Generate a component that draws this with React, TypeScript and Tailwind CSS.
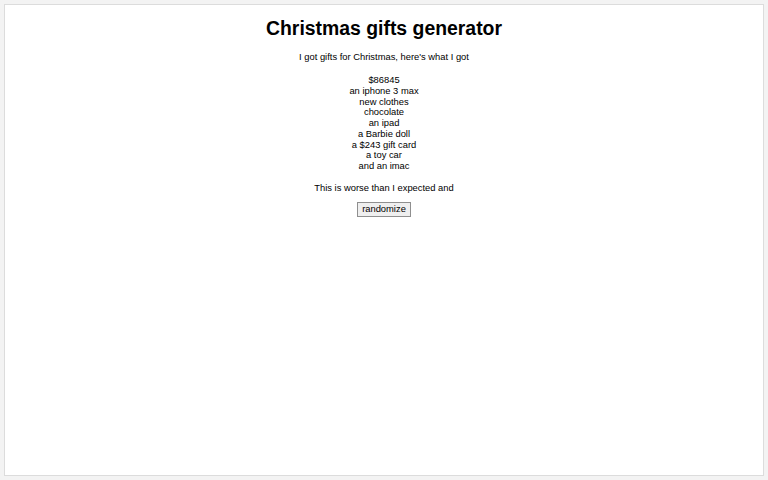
import React, { useState } from "react";

const GIFTS = [
  "$86845",
  "an iphone 3 max",
  "new clothes",
  "chocolate",
  "an ipad",
  "a Barbie doll",
  "a $243 gift card",
  "a toy car",
  "and an imac",
];

export default function App() {
  const [gifts, setGifts] = useState<string[]>(GIFTS);

  function randomize() {
    const next = [...gifts];
    next.sort(() => Math.random() - 0.5);
    setGifts(next);
  }

  return (
    <div className="h-[480px] w-[768px] bg-[#f3f3f3] p-[4px]">
      <div className="h-full w-full border border-[#dcdcdc] bg-white text-center font-['Liberation_Sans',Arial,sans-serif] text-[9.37px] leading-normal text-black">
        <h1 className="mt-[12px] text-[19.4px] font-bold leading-[22px]">Christmas gifts generator</h1>
        <p className="mt-[11px]">I got gifts for Christmas, here's what I got</p>
        <div className="mt-[11px] leading-[10.75px]">
          {gifts.map((gift) => (
            <div key={gift}>{gift}</div>
          ))}
        </div>
        <p className="mt-[9px]">This is worse than I expected and</p>
        <button
          type="button"
          onClick={randomize}
          className="mt-[7px] border border-[#8f8f8f] bg-[#efefef] px-[4px] py-[1px] leading-[11px]"
        >
          randomize
        </button>
      </div>
    </div>
  );
}
